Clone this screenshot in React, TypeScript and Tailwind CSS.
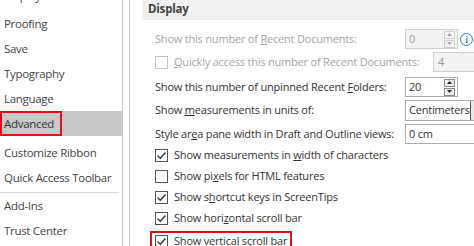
import React from 'react'

const Check = ({ checked = false, disabled = false }: { checked?: boolean; disabled?: boolean }) => (
  <span
    className={`flex h-[13px] w-[13px] shrink-0 items-center justify-center border bg-white ${
      disabled ? 'border-[#c4c4c4]' : 'border-[#555]'
    }`}
  >
    {checked && (
      <svg width="11" height="11" viewBox="0 0 11 11">
        <path d="M1.5 5.5 L4.3 8.3 L9.5 2.5" fill="none" stroke="#333" strokeWidth="1.3" />
      </svg>
    )}
  </span>
)

const Spinner = ({ disabled = false }: { disabled?: boolean }) => {
  const b = disabled ? 'border-[#d0d0d0] bg-[#f4f4f4]' : 'border-[#8a8a8a] bg-[#f0f0f0]'
  const c = disabled ? '#a8a8a8' : '#222'
  return (
    <span className="mr-[2px] flex flex-col gap-[1px]">
      <span className={`flex h-[8px] w-[11px] items-center justify-center border ${b}`}>
        <svg width="5" height="3" viewBox="0 0 5 3">
          <path d="M0 3 L2.5 0 L5 3 Z" fill={c} />
        </svg>
      </span>
      <span className={`flex h-[8px] w-[11px] items-center justify-center border ${b}`}>
        <svg width="5" height="3" viewBox="0 0 5 3">
          <path d="M0 0 L2.5 3 L5 0 Z" fill={c} />
        </svg>
      </span>
    </span>
  )
}

const nav = ['Proofing', 'Save', 'Typography', 'Language']

export default function App() {
  return (
    <div className="flex h-[246px] w-[474px] overflow-hidden whitespace-nowrap bg-white font-['Open_Sans',sans-serif] text-[#444]">
      {/* Left nav */}
      <div className="w-[123px] shrink-0 border-r border-[#c6c6c6] text-[11.5px] tracking-[-0.3px]">
        <div className="-mt-[14px]">
          <div className="h-[25px] pl-[4px] leading-[20px]">Display</div>
          {nav.map((n) => (
            <div key={n} className="h-[25px] pl-[4px] leading-[25px]">
              {n}
            </div>
          ))}
          <div className="h-[25px] bg-[#c8c8c8]">
            <div className="h-full w-[62px] border-2 border-[#e0101a] pl-[2px] leading-[21px] text-[#333]">Advanced</div>
          </div>
          <div className="mt-[4px] h-[25px] pl-[4px] leading-[25px]">Customize Ribbon</div>
          <div className="h-[25px] pl-[4px] leading-[25px]">Quick Access Toolbar</div>
          <div className="mt-[2px] mr-[3px] h-px bg-[#d8d8d8]" />
          <div className="h-[25px] pl-[4px] leading-[25px]">Add-Ins</div>
          <div className="h-[25px] pl-[4px] leading-[25px]">Trust Center</div>
        </div>
      </div>

      {/* Right pane */}
      <div className="ml-[6px] min-w-0 flex-1 border-l border-[#c6c6c6] pl-[12px] text-[11px] tracking-[-0.2px] text-[#333]">
        <div className="h-[20px] w-[340px] bg-[#f0f0f0] pl-[6px] text-[11.5px] font-bold leading-[18px] text-[#444]">
          Display
        </div>

        <div className="pl-[13px]">
          <div className="mt-[8px] flex h-[22px] items-center text-[#a6a6a6]">
            <span className="w-[250px] shrink-0">
              Show this number of <u>R</u>ecent Documents:
            </span>
            <span className="flex h-[20px] w-[53px] shrink-0 items-center justify-between border border-[#d0d0d0] bg-[#f3f3f3] pl-[3px] text-[#999]">
              0
              <Spinner disabled />
            </span>
            <span className="ml-[2px] flex h-[13px] w-[13px] shrink-0 items-center justify-center rounded-full border border-[#3b7fd4] text-[9px] font-bold leading-none text-[#3b7fd4]">
              i
            </span>
          </div>

          <div className="mt-[1px] flex h-[22px] items-center text-[#a6a6a6]">
            <span className="flex w-[278px] shrink-0 items-center gap-[6px]">
              <Check disabled />
              <span>
                <u>Q</u>uickly access this number of Recent Documents:
              </span>
            </span>
            <span className="flex h-[20px] w-[60px] shrink-0 items-center border border-[#d0d0d0] bg-[#f3f3f3] pl-[4px] text-[#999]">
              4
            </span>
          </div>

          <div className="mt-[3px] flex h-[22px] items-center">
            <span className="w-[250px] shrink-0">
              Show this number of unpinned Recent <u>F</u>olders:
            </span>
            <span className="flex h-[20px] w-[53px] shrink-0 items-center justify-between border border-[#adadad] bg-white pl-[3px]">
              20
              <Spinner />
            </span>
          </div>

          <div className="mt-[1px] flex h-[22px] items-center">
            <span className="w-[250px] shrink-0">
              Show <u>m</u>easurements in units of:
            </span>
            <span className="flex h-[21px] w-[80px] shrink-0 items-center justify-between border border-[#adadad] bg-white pl-[3px]">
              Centimeters
              <span className="h-full w-[14px] border-l border-[#555] bg-[#e8e8e8]" />
            </span>
          </div>

          <div className="mt-[2px] flex h-[22px] items-center">
            <span className="w-[250px] shrink-0">
              Style ar<u>e</u>a pane width in Draft and Outline views:
            </span>
            <span className="flex h-[20px] w-[80px] shrink-0 items-center border border-[#adadad] bg-white pl-[3px]">
              0 cm
            </span>
          </div>

          {[
            { c: true, t: <>Show measurements in <u>w</u>idth of characters</> },
            { c: false, t: <>Show pi<u>x</u>els for HTML features</> },
            { c: true, t: <>Show s<u>h</u>ortcut keys in ScreenTips</> },
            { c: true, t: <>Show hori<u>z</u>ontal scroll bar</> },
          ].map((r, i) => (
            <div key={i} className="flex h-[21px] items-center gap-[6px]">
              <Check checked={r.c} />
              <span>{r.t}</span>
            </div>
          ))}

          <div className="mt-[2px] -ml-[5px] flex h-[21px] w-[142px] items-center gap-[6px] border-2 border-[#e0101a] pl-[3px]">
            <Check checked />
            <span>
              Show <u>v</u>ertical scroll bar
            </span>
          </div>
        </div>
      </div>
    </div>
  )
}
